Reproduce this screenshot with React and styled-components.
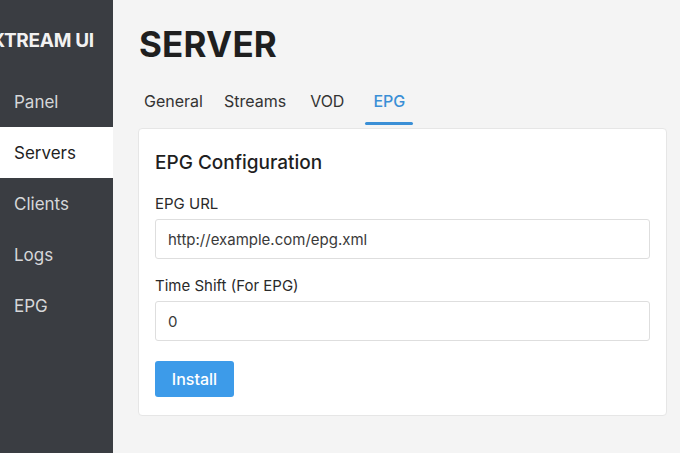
import React from "react";
import styled, { createGlobalStyle } from "styled-components";

const Global = createGlobalStyle`
  html, body { margin: 0; padding: 0; }
  body {
    width: 680px;
    height: 453px;
    overflow: hidden;
    background: #f4f4f4;
    font-family: Inter, "Noto Sans", "Liberation Sans", sans-serif;
    color: #222;
  }
  * { box-sizing: border-box; }
`;

const Layout = styled.div`
  display: flex;
  width: 680px;
  height: 453px;
`;

const Sidebar = styled.nav`
  width: 113px;
  flex-shrink: 0;
  background: #3a3d42;
  display: flex;
  flex-direction: column;
  overflow: hidden;
`;

const Logo = styled.div`
  height: 76px;
  padding-top: 28px;
  margin-left: -9px;
  font-size: 19px;
  font-weight: 700;
  letter-spacing: -0.3px;
  color: #f2f2f2;
  white-space: nowrap;
  line-height: 26px;
`;

const NavItem = styled.div`
  height: 51px;
  display: flex;
  align-items: center;
  padding-left: 14px;
  font-size: 17px;
  color: ${(p) => (p.$active ? "#1f1f1f" : "#d6d7d9")};
  background: ${(p) => (p.$active ? "#ffffff" : "transparent")};
`;

const Main = styled.main`
  flex: 1;
  padding: 22px 13px 0 25px;
  display: flex;
  flex-direction: column;
`;

const Title = styled.h1`
  margin: 0 0 0 1px;
  font-size: 35px;
  font-weight: 700;
  line-height: 44px;
  color: #1f1f1f;
  letter-spacing: 0.2px;
`;

const Tabs = styled.div`
  display: flex;
  margin-top: 25px;
`;

const Tab = styled.div`
  position: relative;
  padding: 0 6px;
  margin-right: ${(p) => p.$mr}px;
  height: 40px;
  font-size: 16px;
  line-height: 20px;
  color: ${(p) => (p.$active ? "#3a8fd6" : "#333")};
  font-weight: ${(p) => (p.$active ? 500 : 400)};
  &::after {
    content: "";
    display: ${(p) => (p.$active ? "block" : "none")};
    position: absolute;
    left: -2px;
    right: -2px;
    top: 31px;
    height: 3px;
    border-radius: 2px;
    background: #3a8fd6;
  }
`;

const Card = styled.section`
  margin-top: -3px;
  width: 529px;
  background: #fff;
  border: 1px solid #e6e6e6;
  border-radius: 4px;
  padding: 22px 16px 18px 16px;
  display: flex;
  flex-direction: column;
`;

const CardTitle = styled.h2`
  margin: 0;
  font-size: 19px;
  font-weight: 500;
  line-height: 24px;
  color: #1f1f1f;
`;

const Label = styled.label`
  margin-top: ${(p) => p.$mt}px;
  font-size: 15px;
  line-height: 20px;
  color: #2a2a2a;
`;

const Input = styled.div`
  margin-top: 5px;
  height: 40px;
  border: 1px solid #dedede;
  border-radius: 3px;
  padding-left: 12px;
  display: flex;
  align-items: center;
  font-size: 15px;
  color: #3a3a3a;
`;

const Button = styled.button`
  margin-top: 20px;
  align-self: flex-start;
  width: 79px;
  height: 36px;
  border: none;
  border-radius: 3px;
  background: #3d9be9;
  color: #fff;
  font-family: inherit;
  font-size: 16px;
  font-weight: 500;
`;

export default function App() {
  return (
    <>
      <Global />
      <Layout>
        <Sidebar>
          <Logo>XTREAM UI</Logo>
          <NavItem>Panel</NavItem>
          <NavItem $active>Servers</NavItem>
          <NavItem>Clients</NavItem>
          <NavItem>Logs</NavItem>
          <NavItem>EPG</NavItem>
        </Sidebar>
        <Main>
          <Title>SERVER</Title>
          <Tabs>
            <Tab $mr={9}>General</Tab>
            <Tab $mr={12}>Streams</Tab>
            <Tab $mr={17}>VOD</Tab>
            <Tab $active $mr={0}>EPG</Tab>
          </Tabs>
          <Card>
            <CardTitle>EPG Configuration</CardTitle>
            <Label $mt={19}>EPG URL</Label>
            <Input>http://example.com/epg.xml</Input>
            <Label $mt={17}>Time Shift (For EPG)</Label>
            <Input>0</Input>
            <Button>Install</Button>
          </Card>
        </Main>
      </Layout>
    </>
  );
}
